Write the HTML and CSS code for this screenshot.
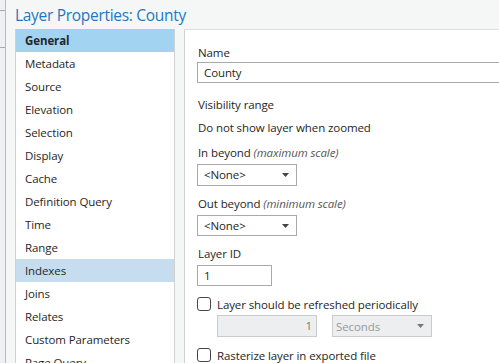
FILE: index.html
```html
<!DOCTYPE html>
<html lang="en">
<head>
    <meta charset="UTF-8">
    <link rel="stylesheet" href="styles.css">
    <title>Layer Properties: County</title>
</head>
<body>
    <div class="app">
        <div class="backdrop">
            <div class="backdrop-row"></div>
            <div class="backdrop-row"></div>
        </div>
        <div class="dialog">
            <h1 class="title">Layer Properties: County</h1>
            <div class="dialog-body">
                <ul class="nav">
                    <li class="nav-item selected">General</li>
                    <li class="nav-item">Metadata</li>
                    <li class="nav-item">Source</li>
                    <li class="nav-item">Elevation</li>
                    <li class="nav-item">Selection</li>
                    <li class="nav-item">Display</li>
                    <li class="nav-item">Cache</li>
                    <li class="nav-item">Definition Query</li>
                    <li class="nav-item">Time</li>
                    <li class="nav-item">Range</li>
                    <li class="nav-item hover">Indexes</li>
                    <li class="nav-item">Joins</li>
                    <li class="nav-item">Relates</li>
                    <li class="nav-item">Custom Parameters</li>
                    <li class="nav-item">Page Query</li>
                </ul>
                <div class="panel">
                    <div class="label label-first">Name</div>
                    <div class="textbox textbox-wide">County</div>

                    <div class="label label-section">Visibility range</div>
                    <div class="label label-note">Do not show layer when zoomed</div>

                    <div class="label label-field">In beyond <em>(maximum scale)</em></div>
                    <div class="combo">
                        <span>&lt;None&gt;</span>
                        <svg class="arrow" width="7" height="4" viewBox="0 0 7 4"><polygon points="0,0 7,0 3.5,4" fill="#444"/></svg>
                    </div>

                    <div class="label label-field">Out beyond <em>(minimum scale)</em></div>
                    <div class="combo">
                        <span>&lt;None&gt;</span>
                        <svg class="arrow" width="7" height="4" viewBox="0 0 7 4"><polygon points="0,0 7,0 3.5,4" fill="#444"/></svg>
                    </div>

                    <div class="label label-field">Layer ID</div>
                    <div class="textbox textbox-id">1</div>

                    <div class="check-row">
                        <span class="checkbox"></span>
                        <span>Layer should be refreshed periodically</span>
                    </div>
                    <div class="refresh-row">
                        <div class="textbox textbox-disabled">1</div>
                        <div class="combo combo-disabled">
                            <span>Seconds</span>
                            <svg class="arrow" width="7" height="4" viewBox="0 0 7 4"><polygon points="0,0 7,0 3.5,4" fill="#777"/></svg>
                        </div>
                    </div>

                    <div class="check-row">
                        <span class="checkbox"></span>
                        <span>Rasterize layer in exported file</span>
                    </div>
                </div>
            </div>
        </div>
    </div>
</body>
</html>
```

FILE: styles.css
```css
html, body {
    margin: 0;
    padding: 0;
    height: 363px;
    overflow: hidden;
    font-family: "Open Sans", "Noto Sans", sans-serif;
    font-size: 11.5px;
    letter-spacing: -0.1px;
    color: #262626;
    background: #f5f6f6;
}

.app {
    display: flex;
    height: 363px;
}

.backdrop {
    width: 5px;
    border-right: 1px solid #b9bcbe;
    background: #eef0f1;
    display: flex;
    flex-direction: column;
    gap: 36px;
    padding-top: 10px;
}

.backdrop-row {
    height: 1px;
    background: #a8abad;
}

.dialog {
    flex: 1;
    display: flex;
    flex-direction: column;
    padding-left: 9px;
    min-width: 0;
}

.title {
    margin: 0;
    height: 29px;
    padding-top: 4px;
    box-sizing: border-box;
    font-size: 15.5px;
    font-weight: 400;
    letter-spacing: -0.3px;
    line-height: 22px;
    color: #1f77c3;
    white-space: nowrap;
}

.dialog-body {
    flex: 1;
    display: flex;
    gap: 9px;
    min-height: 0;
}

.nav {
    list-style: none;
    margin: 0;
    padding: 0;
    width: 158px;
    background: #fff;
    border: 1px solid #cfd1d2;
    border-top: 0;
    border-bottom: 0;
}

.nav-item {
    height: 23px;
    line-height: 23px;
    padding-left: 9px;
    white-space: nowrap;
}

.nav-item.selected {
    background: #a2d4f2;
    font-weight: 700;
}

.nav-item.hover {
    background: #c6ddef;
}

.panel {
    flex: 1;
    background: #fff;
    border-left: 1px solid #cfd1d2;
    border-top: 1px solid #dcdedf;
    padding: 15px 0 0 12px;
    display: flex;
    flex-direction: column;
    align-items: flex-start;
    min-width: 0;
}

.label {
    line-height: 16px;
    padding-left: 1px;
    white-space: nowrap;
}

.label em {
    color: #555;
}

.label-first {
    margin-bottom: 1px;
}

.label-section {
    margin-top: 14px;
}

.label-note {
    margin-top: 7px;
}

.label-field {
    margin-top: 9px;
    margin-bottom: 3px;
}

.textbox {
    box-sizing: border-box;
    height: 21px;
    line-height: 19px;
    border: 1px solid #a9a9a9;
    padding: 0 6px;
    background: #fff;
}

.textbox-wide {
    width: 320px;
}

.textbox-id {
    width: 75px;
}

.combo {
    box-sizing: border-box;
    width: 100px;
    height: 22px;
    border: 1px solid #a9a9a9;
    display: flex;
    align-items: center;
    justify-content: space-between;
    padding: 0 7px 0 6px;
    background: #fff;
}

.combo + .label-field {
    margin-top: 10px;
}

.check-row {
    display: flex;
    align-items: center;
    gap: 6px;
    margin-top: 10px;
    height: 16px;
    white-space: nowrap;
}

.checkbox {
    box-sizing: border-box;
    width: 14px;
    height: 14px;
    border: 1px solid #444;
    border-radius: 3px;
    background: #fff;
}

.refresh-row {
    display: flex;
    gap: 15px;
    margin: 3px 0 0 20px;
}

.textbox-disabled {
    width: 100px;
    height: 22px;
    background: #eceeef;
    border-color: #c9cbcd;
    color: #777;
    text-align: right;
    padding-right: 4px;
    line-height: 20px;
}

.combo-disabled {
    background: #eceeef;
    border-color: #c9cbcd;
    color: #9a9a9a;
    padding-left: 3px;
}
```
